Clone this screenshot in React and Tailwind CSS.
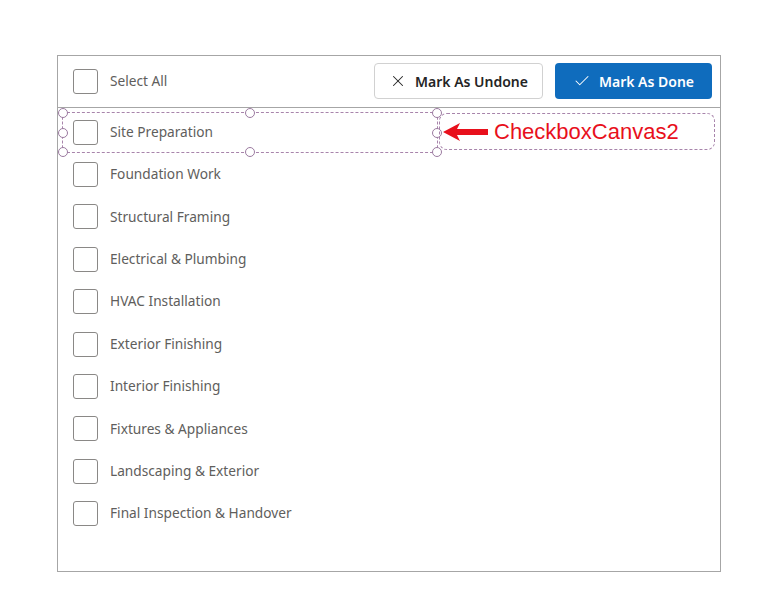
import { X, Check } from "lucide-react";

const TASKS = [
  "Site Preparation",
  "Foundation Work",
  "Structural Framing",
  "Electrical & Plumbing",
  "HVAC Installation",
  "Exterior Finishing",
  "Interior Finishing",
  "Fixtures & Appliances",
  "Landscaping & Exterior",
  "Final Inspection & Handover",
];

function Box() {
  return <span className="w-[25px] h-[25px] shrink-0 rounded-[3px] border border-[#8a8886] bg-white" />;
}

function Handle({ className }) {
  return (
    <span
      className={`absolute w-[10px] h-[10px] rounded-full border border-[#9b7aa0] bg-white -translate-x-1/2 -translate-y-1/2 ${className}`}
    />
  );
}

export default function App() {
  return (
    <div className="w-[768px] h-[615px] bg-white pt-[55px] pl-[57px] font-['Noto_Sans','Open_Sans',sans-serif]">
      <div className="relative w-[664px] h-[517px] border border-[#a6a6a6]">
        {/* Header */}
        <div className="flex items-center h-[52px] border-b border-[#a6a6a6] pl-[15px] pr-[8px] pb-[1px]">
          <Box />
          <span className="ml-[12px] text-[13.7px] text-[#605e5c]">Select All</span>
          <div className="ml-auto flex gap-[12px]">
            <button className="flex items-center gap-[8px] h-[36px] w-[169px] justify-center rounded-[4px] border border-[#d1d1d1] bg-white text-[14px] font-semibold text-[#242424]">
              <X size={18} strokeWidth={1.4} />
              Mark As Undone
            </button>
            <button className="flex items-center gap-[8px] h-[36px] w-[157px] justify-center rounded-[4px] bg-[#0f6cbd] text-[14px] font-semibold text-white">
              <Check size={18} strokeWidth={1.4} />
              Mark As Done
            </button>
          </div>
        </div>

        {/* Task rows */}
        <div className="flex flex-col pt-[3px]">
          {TASKS.map((t) => (
            <div key={t} className="flex items-center h-[42.4px] pl-[15px]">
              <Box />
              <span className="ml-[12px] text-[13.7px] text-[#605e5c]">{t}</span>
            </div>
          ))}
        </div>

        {/* Selection annotation */}
        <div className="absolute left-[4px] top-[56px] w-[376px] h-[41px] border border-dashed border-[#a884ab]">
          <Handle className="left-0 top-0" />
          <Handle className="left-0 top-1/2" />
          <Handle className="left-0 top-full" />
          <Handle className="left-1/2 top-0" />
          <Handle className="left-1/2 top-full" />
          <Handle className="left-full top-0" />
          <Handle className="left-full top-1/2" />
          <Handle className="left-full top-full" />
        </div>
        <div className="absolute left-[381px] top-[57px] w-[276px] h-[37px] rounded-[8px] border border-dashed border-[#a884ab] flex items-center">
          <svg width="46" height="22" viewBox="0 0 46 22" className="ml-[3px]">
            <polygon points="0,11 17,2 14,8 45,8 45,14 14,14 17,20" fill="#e8101c" />
          </svg>
          <span className="ml-[5px] text-[22px] leading-none text-[#e8101c] font-['Liberation_Sans',Arial,sans-serif]">
            CheckboxCanvas2
          </span>
        </div>
      </div>
    </div>
  );
}
